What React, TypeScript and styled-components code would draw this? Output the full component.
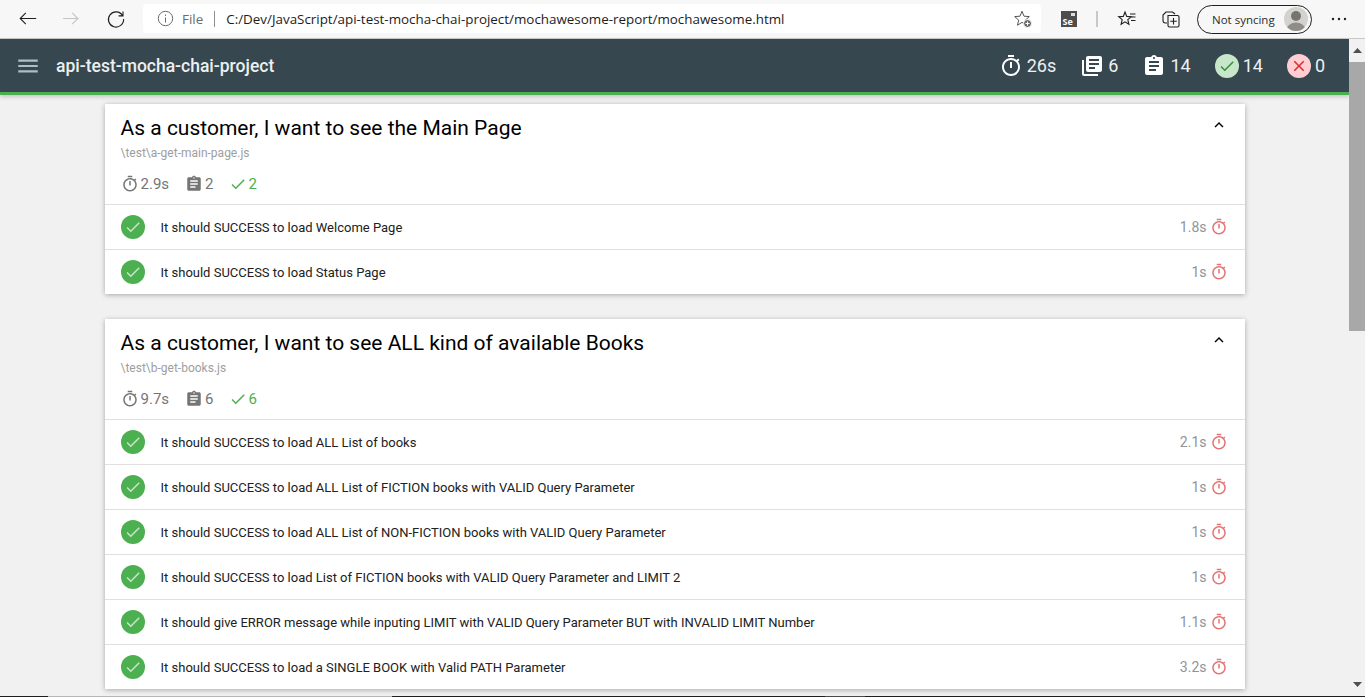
import React from 'react';
import styled, { createGlobalStyle } from 'styled-components';

const GlobalStyle = createGlobalStyle`
  html, body {
    margin: 0;
    height: 100%;
    overflow: hidden;
    background: #f1f1f1;
  }
  * { box-sizing: border-box; }
`;

const Page = styled.div`
  display: flex;
  flex-direction: column;
  height: 697px;
  font-family: Roboto, "Liberation Sans", sans-serif;
`;

const BrowserBar = styled.div`
  flex: none;
  height: 39px;
  display: flex;
  align-items: center;
  background: #f7f7f7;
  border-bottom: 1px solid #c9c9c9;
  padding: 0 0 0 17px;
`;

const NavButton = styled.div<{ $gap?: number; $lead?: number; $size?: number }>`
  width: ${(p) => p.$size ?? 20}px;
  height: ${(p) => p.$size ?? 20}px;
  flex: none;
  margin-left: ${(p) => p.$lead ?? 0}px;
  margin-right: ${(p) => p.$gap ?? 0}px;
  svg { display: block; }
`;

const AddressBar = styled.div`
  width: 898px;
  height: 29px;
  flex: none;
  margin: 0 0 1px 0;
  display: flex;
  align-items: center;
  background: #fff;
  border-radius: 4px;
  padding: 0 8px 0 14px;
  font-family: "Open Sans", "Noto Sans", sans-serif;
  font-size: 13.4px;
`;

const FileLabel = styled.span`
  color: #6b6b6b;
  margin-left: 8px;
`;

const Divider = styled.span`
  width: 1px;
  height: 16px;
  background: #8f8f8f;
  margin: 0 11px 0 11px;
`;

const Url = styled.span`
  flex: 1;
  color: #1c1c1c;
`;

const ToolbarSeparator = styled.span`
  width: 2px;
  height: 16px;
  flex: none;
  background: #c8c8c8;
  margin: 0 19px 0 19px;
`;

const SyncPill = styled.div`
  width: 115px;
  height: 29px;
  flex: none;
  display: flex;
  align-items: center;
  justify-content: space-between;
  border: 1px solid #1f1f1f;
  border-radius: 15px;
  padding: 0 3px 0 14px;
  font-family: "Open Sans", "Noto Sans", sans-serif;
  font-size: 11.5px;
  color: #2b2b2b;
`;

const Avatar = styled.div`
  width: 24px;
  height: 24px;
  border-radius: 50%;
  overflow: hidden;
  svg { display: block; }
`;

const Body = styled.div`
  flex: 1;
  min-height: 0;
  display: flex;
`;

const Report = styled.div`
  flex: 1;
  min-width: 0;
  display: flex;
  flex-direction: column;
`;

const Navbar = styled.header`
  flex: none;
  height: 56px;
  display: flex;
  align-items: center;
  justify-content: space-between;
  background: #37474f;
  border-bottom: 3px solid #4caf50;
  box-shadow: 0 2px 4px rgba(0, 0, 0, 0.18);
  color: #fff;
  padding: 0 24px 0 15px;
`;

const Brand = styled.div`
  display: flex;
  align-items: center;
  gap: 15px;
  font-size: 17.5px;
  font-weight: 500;
  color: #eceff1;
  svg { display: block; }
`;

const Totals = styled.div`
  display: flex;
  align-items: center;
`;

const Total = styled.div<{ $gap: number }>`
  display: flex;
  align-items: center;
  gap: 4px;
  margin-left: ${(p) => p.$gap}px;
  font-size: 18px;
  color: #eef1f2;
  svg { display: block; }
`;

const Badge = styled.span<{ $bg: string }>`
  width: 24px;
  height: 24px;
  border-radius: 50%;
  display: flex;
  align-items: center;
  justify-content: center;
  background: ${(p) => p.$bg};
`;

const Content = styled.main`
  flex: 1;
  min-height: 0;
  display: flex;
  flex-direction: column;
  align-items: center;
  gap: 25px;
  padding-top: 9px;
  overflow: hidden;
`;

const Card = styled.section`
  width: 1140px;
  flex: none;
  background: #fff;
  box-shadow: 0 1px 5px rgba(0, 0, 0, 0.3);
`;

const CardHead = styled.div`
  height: 100px;
  position: relative;
  padding: 10px 16px 0;
`;

const Collapse = styled.div`
  position: absolute;
  top: 12px;
  right: 17px;
  svg { display: block; }
`;

const Title = styled.h3`
  margin: 0;
  font-size: 21px;
  font-weight: 400;
  line-height: 28px;
  color: #000;
`;

const FilePath = styled.div`
  margin-top: 3px;
  font-size: 12px;
  line-height: 16px;
  color: #9e9e9e;
`;

const Stats = styled.div`
  display: flex;
  align-items: center;
  margin-top: 14px;
`;

const Stat = styled.div<{ $color: string; $gap: number }>`
  display: flex;
  align-items: center;
  gap: 2px;
  margin-right: ${(p) => p.$gap}px;
  font-size: 15px;
  color: ${(p) => p.$color};
  svg { display: block; }
`;

const Row = styled.div`
  height: 45px;
  display: flex;
  align-items: center;
  border-top: 1px solid #e0e0e0;
  padding: 0 17px 0 16px;
`;

const PassIcon = styled.span`
  width: 24px;
  height: 24px;
  flex: none;
  border-radius: 50%;
  display: flex;
  align-items: center;
  justify-content: center;
  background: #4caf50;
`;

const RowTitle = styled.span`
  flex: 1;
  margin-left: 16px;
  font-size: 13px;
  color: #212121;
`;

const Duration = styled.span`
  display: flex;
  align-items: center;
  gap: 3px;
  font-size: 14px;
  color: #8f9499;
  svg { display: block; }
`;

const Scrollbar = styled.div`
  width: 16px;
  flex: none;
  display: flex;
  flex-direction: column;
  align-items: center;
  background: #f1f1f1;
`;

const ScrollArrow = styled.div`
  height: 23px;
  width: 100%;
  display: flex;
  align-items: center;
  justify-content: center;
`;

const Thumb = styled.div`
  width: 100%;
  height: 269px;
  background: #a8a8a8;
`;

const ScrollGap = styled.div`
  flex: 1;
`;

const Taskbar = styled.div`
  flex: none;
  height: 1px;
  display: flex;
  background: #1f1f1f;
`;

const TaskbarPart = styled.div<{ $width: number; $color: string }>`
  width: ${(p) => p.$width}px;
  background: ${(p) => p.$color};
`;

const M = {
  timer: 'M15 1H9v2h6V1zm-4 13h2V8h-2v6zm8.03-6.61l1.42-1.42c-.43-.51-.9-.99-1.41-1.41l-1.42 1.42C16.07 4.74 14.12 4 12 4c-4.97 0-9 4.03-9 9s4.02 9 9 9 9-4.03 9-9c0-2.12-.74-4.07-1.97-5.61zM12 20c-3.87 0-7-3.13-7-7s3.13-7 7-7 7 3.13 7 7-3.13 7-7 7z',
  books: 'M4 6H2v14c0 1.1.9 2 2 2h14v-2H4V6zm16-4H8c-1.1 0-2 .9-2 2v12c0 1.1.9 2 2 2h12c1.1 0 2-.9 2-2V4c0-1.1-.9-2-2-2zm-1 9H9V9h10v2zm-4 4H9v-2h6v2zm4-8H9V5h10v2z',
  assignment: 'M19 3h-4.18C14.4 1.84 13.3 1 12 1c-1.3 0-2.4.84-2.82 2H5c-1.1 0-2 .9-2 2v14c0 1.1.9 2 2 2h14c1.1 0 2-.9 2-2V5c0-1.1-.9-2-2-2zm-7 0c.55 0 1 .45 1 1s-.45 1-1 1-1-.45-1-1 .45-1 1-1zm2 14H7v-2h7v2zm3-4H7v-2h10v2zm0-4H7V7h10v2z',
  check: 'M9 16.17L4.83 12l-1.42 1.41L9 19 21 7l-1.41-1.41z',
  close: 'M19 6.41L17.59 5 12 10.59 6.41 5 5 6.41 10.59 12 5 17.59 6.41 19 12 13.41 17.59 19 19 17.59 13.41 12z',
  up: 'M7.41 15.41L12 10.83l4.59 4.58L18 14l-6-6-6 6z',
  menu: 'M3 18h18v-2H3v2zm0-5h18v-2H3v2zm0-7v2h18V6H3z',
};

const Icon = ({ d, size, color }: { d: string; size: number; color: string }) => (
  <svg width={size} height={size} viewBox="0 0 24 24" fill={color}>
    <path d={d} />
  </svg>
);

const Line = ({ d, color = '#1f1f1f', size = 20 }: { d: string; color?: string; size?: number }) => (
  <svg width={size} height={size} viewBox="0 0 20 20" fill="none" stroke={color} strokeWidth="1.1">
    <path d={d} />
  </svg>
);

const TestRow = ({ title, time }: { title: string; time: string }) => (
  <Row>
    <PassIcon>
      <Icon d={M.check} size={18} color="#c8e6c9" />
    </PassIcon>
    <RowTitle>{title}</RowTitle>
    <Duration>
      {time}
      <Icon d={M.timer} size={18} color="#e57373" />
    </Duration>
  </Row>
);

const Suite = ({ title, file, time, tests, children }: { title: string; file: string; time: string; tests: number; children: React.ReactNode }) => (
  <Card>
    <CardHead>
      <Title>{title}</Title>
      <Collapse>
        <Icon d={M.up} size={18} color="#000" />
      </Collapse>
      <FilePath>{file}</FilePath>
      <Stats>
        <Stat $color="#757575" $gap={16}>
          <Icon d={M.timer} size={18} color="#757575" />
          {time}
        </Stat>
        <Stat $color="#757575" $gap={15}>
          <Icon d={M.assignment} size={18} color="#757575" />
          {tests}
        </Stat>
        <Stat $color="#4caf50" $gap={0}>
          <Icon d={M.check} size={18} color="#4caf50" />
          {tests}
        </Stat>
      </Stats>
    </CardHead>
    {children}
  </Card>
);

export default function App() {
  return (
    <Page>
      <GlobalStyle />
      <BrowserBar>
        <NavButton $gap={24}>
          <Line d="M19.200 9.500H3.300M8.800 3.900L3.200 9.500l5.600 5.600" />
        </NavButton>
        <NavButton $gap={25}>
          <Line d="M2 9.500h15.700M11.200 3.900l5.600 5.600-5.600 5.600" color="#c4c4c4" />
        </NavButton>
        <NavButton $gap={17}>
          <Line d="M16.500 6.500A7.600 7.600 0 1 0 17.600 10M17 2.500v4.400h-4.400" />
        </NavButton>
        <AddressBar>
          <svg width="17" height="17" viewBox="0 0 17 17" fill="none" stroke="#6b6b6b" strokeWidth="1">
            <circle cx="8.500" cy="8.500" r="7.200" />
            <path d="M8.500 7.500v5M8.500 4.500v1.400" />
          </svg>
          <FileLabel>File</FileLabel>
          <Divider />
          <Url>C:/Dev/JavaScript/api-test-mocha-chai-project/mochawesome-report/mochawesome.html</Url>
          <svg width="20" height="20" viewBox="0 0 20 20" fill="none" stroke="#555" strokeWidth="1">
            <path d="M9 2.200l2 5 5.300.4-4 3.500 1.200 5.100L9 13.400l-4.500 2.800 1.200-5.100-4-3.500 5.300-.4z" />
            <circle cx="14.500" cy="14.500" r="4" fill="#666" stroke="#fff" />
            <path d="M14.500 12.400v4.200M12.400 14.500h4.200" stroke="#fff" />
          </svg>
        </AddressBar>
        <NavButton $lead={20} $size={16}>
          <svg width="16" height="16" viewBox="0 0 16 16">
            <rect width="16" height="16" fill="#4d4d4d" />
            <rect x="10" y="2" width="4" height="3" fill="#ddd" />
            <text x="1.500" y="13.500" fontSize="9" fontWeight="700" fill="#fff" fontFamily="Open Sans">Se</text>
          </svg>
        </NavButton>
        <ToolbarSeparator />
        <NavButton $gap={24}>
          <Line d="M8 3l1.700 4.400 4.600.3-3.500 3 1.100 4.600L8 12.800l-3.900 2.500 1.100-4.600-3.500-3 4.600-.3zM13.500 8h5M14 11.500h4.500M13 5h5.500" />
        </NavButton>
        <NavButton $gap={16}>
          <Line d="M6 14H4.500A2.500 2.500 0 0 1 2 11.500V6l3-3h6.500L14 5M7 6.500h9.500a1.500 1.500 0 0 1 1.500 1.500v8.500a1.500 1.500 0 0 1-1.500 1.500H8.500A1.500 1.500 0 0 1 7 16.500zM12.500 9v6.500M9.200 12.200h6.600" />
        </NavButton>
        <SyncPill>
          Not syncing
          <Avatar>
            <svg width="24" height="24" viewBox="0 0 24 24">
              <rect width="24" height="24" fill="#d4d2cf" />
              <circle cx="12" cy="9" r="5" fill="#76746f" />
              <ellipse cx="12" cy="22" rx="9" ry="6.500" fill="#8f8d88" />
            </svg>
          </Avatar>
        </SyncPill>
        <NavButton $lead={17}>
          <svg width="20" height="20" viewBox="0 0 20 20" fill="#1f1f1f">
            <circle cx="4" cy="10" r="1.200" />
            <circle cx="10" cy="10" r="1.200" />
            <circle cx="16" cy="10" r="1.200" />
          </svg>
        </NavButton>
      </BrowserBar>
      <Body>
        <Report>
          <Navbar>
            <Brand>
              <Icon d={M.menu} size={26} color="#b0bec5" />
              api-test-mocha-chai-project
            </Brand>
            <Totals>
              <Total $gap={0}>
                <Icon d={M.timer} size={24} color="#fff" />
                26s
              </Total>
              <Total $gap={24}>
                <Icon d={M.books} size={24} color="#fff" />
                6
              </Total>
              <Total $gap={24}>
                <Icon d={M.assignment} size={24} color="#fff" />
                14
              </Total>
              <Total $gap={24}>
                <Badge $bg="#c8e6c9">
                  <Icon d={M.check} size={18} color="#388e3c" />
                </Badge>
                14
              </Total>
              <Total $gap={24}>
                <Badge $bg="#ffcdd2">
                  <Icon d={M.close} size={18} color="#d32f2f" />
                </Badge>
                0
              </Total>
            </Totals>
          </Navbar>
          <Content>
            <Suite title="As a customer, I want to see the Main Page" file="\test\a-get-main-page.js" time="2.9s" tests={2}>
              <TestRow title="It should SUCCESS to load Welcome Page" time="1.8s" />
              <TestRow title="It should SUCCESS to load Status Page" time="1s" />
            </Suite>
            <Suite title="As a customer, I want to see ALL kind of available Books" file="\test\b-get-books.js" time="9.7s" tests={6}>
              <TestRow title="It should SUCCESS to load ALL List of books" time="2.1s" />
              <TestRow title="It should SUCCESS to load ALL List of FICTION books with VALID Query Parameter" time="1s" />
              <TestRow title="It should SUCCESS to load ALL List of NON-FICTION books with VALID Query Parameter" time="1s" />
              <TestRow title="It should SUCCESS to load List of FICTION books with VALID Query Parameter and LIMIT 2" time="1s" />
              <TestRow title="It should give ERROR message while inputing LIMIT with VALID Query Parameter BUT with INVALID LIMIT Number" time="1.1s" />
              <TestRow title="It should SUCCESS to load a SINGLE BOOK with Valid PATH Parameter" time="3.2s" />
            </Suite>
          </Content>
        </Report>
        <Scrollbar>
          <ScrollArrow>
            <svg width="9" height="5" viewBox="0 0 9 5" fill="#505050">
              <path d="M4.500 0L9 5H0z" />
            </svg>
          </ScrollArrow>
          <Thumb />
          <ScrollGap />
          <ScrollArrow>
            <svg width="9" height="5" viewBox="0 0 9 5" fill="#505050">
              <path d="M0 0h9L4.500 5z" />
            </svg>
          </ScrollArrow>
        </Scrollbar>
      </Body>
      <Taskbar>
        <TaskbarPart $width={48} $color="#1f1f1f" />
        <TaskbarPart $width={344} $color="#b5b5b5" />
        <TaskbarPart $width={433} $color="#1f1f1f" />
        <TaskbarPart $width={40} $color="#4a4a4a" />
      </Taskbar>
    </Page>
  );
}
